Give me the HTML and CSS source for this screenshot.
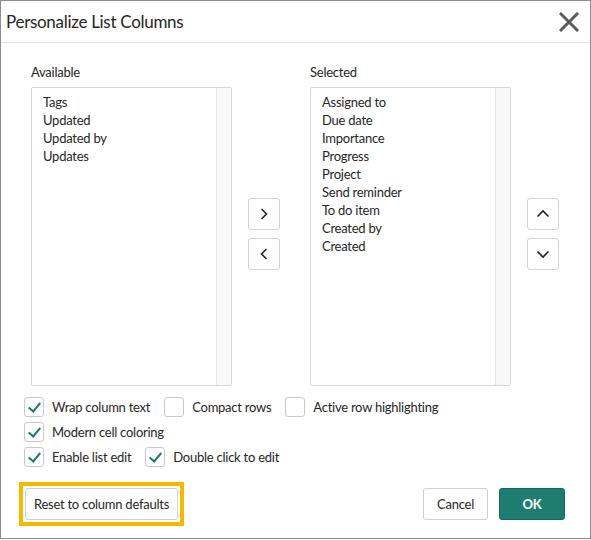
FILE: index.html
```html
<!DOCTYPE html>
<html lang="en">
<head>
    <meta charset="UTF-8">
    <title>Personalize List Columns</title>
    <link rel="stylesheet" href="styles.css">
</head>
<body>
    <div class="dialog">
        <header class="dialog-header">
            <h1>Personalize List Columns</h1>
            <button class="close" aria-label="Close">
                <svg width="20" height="20" viewBox="0 0 20 20"><path d="M2 2 L18 18 M18 2 L2 18" stroke="#5b5b5b" stroke-width="3" stroke-linecap="square"/></svg>
            </button>
        </header>

        <div class="dialog-body">
            <div class="columns">
                <div class="column">
                    <div class="column-label">Available</div>
                    <div class="list-box">
                        <ul>
                            <li>Tags</li>
                            <li>Updated</li>
                            <li>Updated by</li>
                            <li>Updates</li>
                        </ul>
                        <div class="scroll-track"></div>
                    </div>
                </div>

                <div class="move-buttons">
                    <button class="icon-btn" aria-label="Add">
                        <svg width="12" height="12" viewBox="0 0 12 12"><path d="M3.5 1 L8.5 6 L3.5 11" fill="none" stroke="#222" stroke-width="1.6"/></svg>
                    </button>
                    <button class="icon-btn" aria-label="Remove">
                        <svg width="12" height="12" viewBox="0 0 12 12"><path d="M8.5 1 L3.5 6 L8.5 11" fill="none" stroke="#222" stroke-width="1.6"/></svg>
                    </button>
                </div>

                <div class="column">
                    <div class="column-label">Selected</div>
                    <div class="list-box">
                        <ul>
                            <li>Assigned to</li>
                            <li>Due date</li>
                            <li>Importance</li>
                            <li>Progress</li>
                            <li>Project</li>
                            <li>Send reminder</li>
                            <li>To do item</li>
                            <li>Created by</li>
                            <li>Created</li>
                        </ul>
                        <div class="scroll-track"></div>
                    </div>
                </div>

                <div class="move-buttons">
                    <button class="icon-btn" aria-label="Move up">
                        <svg width="14" height="14" viewBox="0 0 14 14"><path d="M1.5 9.5 L7 4 L12.5 9.5" fill="none" stroke="#222" stroke-width="1.6"/></svg>
                    </button>
                    <button class="icon-btn" aria-label="Move down">
                        <svg width="14" height="14" viewBox="0 0 14 14"><path d="M1.5 4.5 L7 10 L12.5 4.5" fill="none" stroke="#222" stroke-width="1.6"/></svg>
                    </button>
                </div>
            </div>

            <div class="options">
                <div class="option-row">
                    <label class="option"><span class="box checked"></span>Wrap column text</label>
                    <label class="option"><span class="box"></span>Compact rows</label>
                    <label class="option"><span class="box"></span>Active row highlighting</label>
                </div>
                <div class="option-row">
                    <label class="option"><span class="box checked"></span>Modern cell coloring</label>
                </div>
                <div class="option-row">
                    <label class="option"><span class="box checked"></span>Enable list edit</label>
                    <label class="option"><span class="box checked"></span>Double click to edit</label>
                </div>
            </div>
        </div>

        <footer class="dialog-footer">
            <span class="focus-ring"><button class="btn reset">Reset to column defaults</button></span>
            <div class="footer-right">
                <button class="btn cancel">Cancel</button>
                <button class="btn primary">OK</button>
            </div>
        </footer>
    </div>
</body>
</html>
```

FILE: styles.css
```css
body {
    margin: 0;
    background-color: #fff;
    font-family: Lato, "Open Sans", sans-serif;
    color: #262626;
}

.dialog {
    width: 591px;
    height: 539px;
    box-sizing: border-box;
    border: 1px solid #8c8c8c;
    display: flex;
    flex-direction: column;
}

.dialog-header {
    height: 42px;
    box-sizing: border-box;
    border-bottom: 1px solid #e2e2e2;
    display: flex;
    align-items: center;
    justify-content: space-between;
    padding: 0 11px 0 5px;
}

.dialog-header h1 {
    margin: 0;
    font-size: 17px;
    letter-spacing: -0.3px;
    font-weight: 400;
    color: #262626;
}

.close {
    border: none;
    background: none;
    padding: 0;
    width: 20px;
    height: 20px;
    display: flex;
}

.dialog-body {
    flex: 1;
    padding: 21px 0 0 30px;
    font-size: 13px;
    letter-spacing: -0.25px;
}

.columns {
    display: flex;
}

.column {
    width: 201px;
}

.column-label {
    height: 23px;
}

.list-box {
    height: 299px;
    box-sizing: border-box;
    border: 1px solid #d6d6d6;
    border-radius: 2px;
    display: flex;
}

.list-box ul {
    flex: 1;
    list-style: none;
    margin: 0;
    padding: 5px 0 0 11px;
    line-height: 18px;
}

.scroll-track {
    width: 14px;
    background-color: #f8f8f8;
    border-left: 1px solid #e6e6e6;
}

.move-buttons {
    width: 32px;
    margin: 134px 30px 0 16px;
    display: flex;
    flex-direction: column;
    gap: 8px;
}

.icon-btn {
    width: 32px;
    height: 32px;
    box-sizing: border-box;
    border: 1px solid #d3d3d3;
    border-radius: 3px;
    background-color: #fff;
    padding: 0;
    display: flex;
    align-items: center;
    justify-content: center;
}

.options {
    margin: 11px 0 0 -7px;
    display: flex;
    flex-direction: column;
    gap: 5px;
}

.option-row {
    display: flex;
    gap: 14px;
}

.option {
    display: flex;
    align-items: center;
    gap: 8px;
    height: 20px;
}

.box {
    width: 20px;
    height: 20px;
    box-sizing: border-box;
    border: 1px solid #c9c9c9;
    border-radius: 3px;
    position: relative;
}

.box.checked::after {
    content: "";
    position: absolute;
    left: 6px;
    top: 2px;
    width: 5px;
    height: 10px;
    border-right: 2px solid #1b7a6c;
    border-bottom: 2px solid #1b7a6c;
    transform: rotate(40deg);
}

.dialog-footer {
    display: flex;
    justify-content: space-between;
    align-items: center;
    padding: 0 25px 12px 18px;
}

.footer-right {
    display: flex;
    gap: 11px;
}

.focus-ring {
    display: flex;
    border: 4px solid #f7b900;
    padding: 2px;
}

.btn {
    height: 32px;
    box-sizing: border-box;
    border: 1px solid #cfcfcf;
    border-radius: 3px;
    background-color: #fff;
    font-family: inherit;
    font-size: 13px;
    letter-spacing: -0.25px;
    color: #262626;
    padding: 0;
}

.btn.reset {
    width: 153px;
}

.btn.cancel {
    width: 65px;
}

.btn.primary {
    width: 66px;
    background-color: #1f7d6f;
    border-color: #16695d;
    color: #fff;
    font-weight: 700;
}
```
